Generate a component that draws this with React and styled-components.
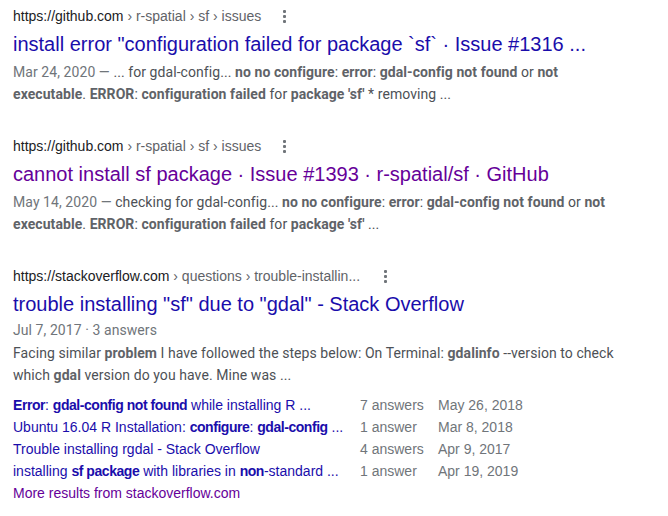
import React from 'react'
import styled, { createGlobalStyle } from 'styled-components'

const Global = createGlobalStyle`
  body {
    margin: 0;
    background: #fff;
    font-family: Arial, "Liberation Sans", sans-serif;
  }
`

const Page = styled.div`
  padding: 7px 13px 0 13px;
  display: flex;
  flex-direction: column;
  gap: 32px;
`

const Result = styled.div`
  display: flex;
  flex-direction: column;
`

const UrlRow = styled.div`
  display: flex;
  align-items: center;
  height: 18px;
  font-size: 14px;
  line-height: 18px;
  color: #202124;
`

const Crumbs = styled.span`
  color: #5f6368;
`

const Kebab = styled.span`
  display: inline-flex;
  flex-direction: column;
  gap: 2px;
  margin-left: ${p => p.$gap || 22}px;
  span {
    width: 3px;
    height: 3px;
    background: #70757a;
    border-radius: 1px;
  }
`

const Title = styled.a`
  display: block;
  margin-top: 6px;
  font-size: 20px;
  line-height: 26px;
  color: ${p => (p.$visited ? '#660099' : '#1a0dab')};
  text-decoration: none;
  white-space: nowrap;
`

const Snippet = styled.div`
  margin-top: ${p => p.$top || 4}px;
  font-family: Roboto, Arial, sans-serif;
  font-size: 14px;
  line-height: 22px;
  letter-spacing: 0.07px;
  font-variant-ligatures: none;
  color: #4d5156;
  b {
    color: #5f6368;
    font-weight: 700;
  }
`

const Date = styled.span`
  color: #70757a;
`

const Sublinks = styled.div`
  margin-top: 8px;
  display: grid;
  grid-template-columns: 347px 78px auto;
  font-size: 14px;
  line-height: 22px;
`

const SubLink = styled.a`
  color: ${p => (p.$visited ? '#660099' : '#1a0dab')};
  text-decoration: none;
  white-space: nowrap;
  b {
    letter-spacing: -0.45px;
  }
`

const Meta = styled.span`
  color: #70757a;
`

const More = styled.a`
  font-size: 14px;
  line-height: 22px;
  color: #660099;
  text-decoration: none;
`

const Dots = ({ gap }) => (
  <Kebab $gap={gap}>
    <span />
    <span />
    <span />
  </Kebab>
)

const subs = [
  {
    text: (
      <>
        <b>Error</b>: <b>gdal-config not found</b> while installing R ...
      </>
    ),
    answers: '7 answers',
    date: 'May 26, 2018',
  },
  {
    text: (
      <>
        Ubuntu 16.04 R Installation: <b>configure</b>: <b>gdal-config</b> ...
      </>
    ),
    answers: '1 answer',
    date: 'Mar 8, 2018',
  },
  {
    text: <>Trouble installing rgdal - Stack Overflow</>,
    answers: '4 answers',
    date: 'Apr 9, 2017',
  },
  {
    text: (
      <>
        installing <b>sf package</b> with libraries in <b>non</b>-standard ...
      </>
    ),
    answers: '1 answer',
    date: 'Apr 19, 2019',
  },
]

export default function App() {
  return (
    <>
      <Global />
      <Page>
        <Result>
          <UrlRow>
            https://github.com<Crumbs>&nbsp;› r-spatial › sf › issues</Crumbs>
            <Dots gap={22} />
          </UrlRow>
          <Title>install error "configuration failed for package `sf` · Issue #1316 ...</Title>
          <Snippet>
            <Date>Mar 24, 2020 — </Date>... for gdal-config... <b>no no configure</b>: <b>error</b>:{' '}
            <b>gdal-config not found</b> or <b>not</b>
            <br />
            <b>executable</b>. <b>ERROR</b>: <b>configuration failed</b> for <b>package</b> <b>'sf'</b> * removing ...
          </Snippet>
        </Result>

        <Result>
          <UrlRow>
            https://github.com<Crumbs>&nbsp;› r-spatial › sf › issues</Crumbs>
            <Dots gap={22} />
          </UrlRow>
          <Title $visited>cannot install sf package · Issue #1393 · r-spatial/sf · GitHub</Title>
          <Snippet>
            <Date>May 14, 2020 — </Date>checking for gdal-config... <b>no no configure</b>: <b>error</b>:{' '}
            <b>gdal-config not found</b> or <b>not</b>
            <br />
            <b>executable</b>. <b>ERROR</b>: <b>configuration failed</b> for <b>package</b> <b>'sf'</b> ...
          </Snippet>
        </Result>

        <Result>
          <UrlRow>
            https://stackoverflow.com<Crumbs>&nbsp;› questions › trouble-installin...</Crumbs>
            <Dots gap={24} />
          </UrlRow>
          <Title>trouble installing "sf" due to "gdal" - Stack Overflow</Title>
          <Snippet $top={2}>
            <Date>Jul 7, 2017 · 3 answers</Date>
          </Snippet>
          <Snippet $top={1}>
            Facing similar <b>problem</b> I have followed the steps below: On Terminal: <b>gdalinfo</b> --version to check
            <br />
            which <b>gdal</b> version do you have. Mine was ...
          </Snippet>
          <Sublinks>
            {subs.map((s, i) => (
              <React.Fragment key={i}>
                <SubLink>{s.text}</SubLink>
                <Meta>{s.answers}</Meta>
                <Meta>{s.date}</Meta>
              </React.Fragment>
            ))}
          </Sublinks>
          <More>More results from stackoverflow.com</More>
        </Result>
      </Page>
    </>
  )
}
